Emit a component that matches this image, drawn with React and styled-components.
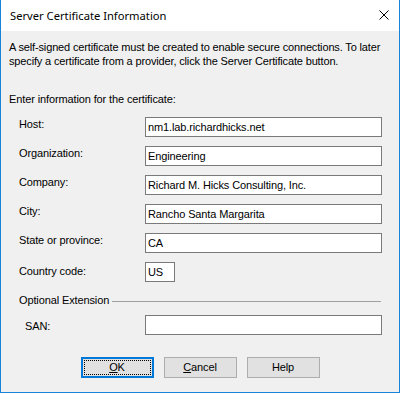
import React from "react";
import styled, { createGlobalStyle } from "styled-components";

const Global = createGlobalStyle`
  html, body { margin: 0; padding: 0; background: #f0f0f0; }
  #root { width: 400px; height: 393px; }
`;

const Window = styled.div`
  box-sizing: border-box;
  width: 400px;
  height: 393px;
  background: #f0f0f0;
  border: 1px solid #1883d7;
  border-top: none;
  display: flex;
  flex-direction: column;
  font-family: "Liberation Sans", Arial, sans-serif;
  font-size: 11px;
  line-height: 13px;
  letter-spacing: -0.12px;
  color: #000;
`;

const TitleBar = styled.div`
  height: 31px;
  flex: none;
  background: #fff;
  display: flex;
  align-items: center;
  justify-content: space-between;
  padding: 0 10px 0 9px;
`;

const Title = styled.div`
  font-family: "Noto Sans", "Open Sans", sans-serif;
  font-size: 11.2px;
  letter-spacing: 0;
  line-height: 16px;
  margin-top: 1px;
`;

const CloseButton = styled.div`
  width: 10px;
  height: 10px;
  margin-top: -2px;
  display: flex;
`;

const Body = styled.div`
  display: flex;
  flex-direction: column;
  padding: 9px 10px 0 8px;
`;

const Intro = styled.p`
  margin: 0;
  line-height: 14px;
  letter-spacing: -0.15px;
`;

const SectionLabel = styled.div`
  margin-top: 25px;
`;

const Form = styled.div`
  margin-top: 11px;
  padding-left: 10px;
  display: grid;
  grid-template-columns: 126px 237px;
  row-gap: 9px;
`;

const Label = styled.div`
  padding-top: ${(p) => p.$offset || 1}px;
  padding-left: ${(p) => p.$indent || 0}px;
`;

const Input = styled.div`
  box-sizing: border-box;
  height: 20px;
  width: ${(p) => p.$width || 237}px;
  background: #fff;
  border: 1px solid #7a7a7a;
  padding: 0 2px;
  display: flex;
  align-items: center;
  white-space: nowrap;
  overflow: hidden;
`;

const GroupHeader = styled.div`
  margin-top: 12px;
  margin-left: 10px;
  display: flex;
  align-items: center;
  gap: 3px;
  width: 362px;
`;

const GroupLine = styled.div`
  flex: 1;
  height: 1px;
  background: #a0a0a0;
  margin-top: 1px;
`;

const SanForm = styled(Form)`
  margin-top: 8px;
`;

const Buttons = styled.div`
  margin-top: 22px;
  display: flex;
  justify-content: center;
  gap: 10px;
  margin-left: 2px;
`;

const Button = styled.div`
  box-sizing: border-box;
  width: 73px;
  height: 21px;
  background: #e1e1e1;
  border: ${(p) => (p.$default ? "2px solid #0078d7" : "1px solid #adadad")};
  display: flex;
  align-items: center;
  justify-content: center;
  position: relative;
  &::after {
    content: "";
    display: ${(p) => (p.$default ? "block" : "none")};
    position: absolute;
    inset: 1px;
    border: 1px dotted #000;
  }
`;

const Mnemonic = styled.span`
  text-decoration: underline;
  text-underline-offset: 1px;
`;

const rows = [
  ["Host:", "nm1.lab.richardhicks.net"],
  ["Organization:", "Engineering"],
  ["Company:", "Richard M. Hicks Consulting, Inc."],
  ["City:", "Rancho Santa Margarita"],
  ["State or province:", "CA"],
];

export default function App() {
  return (
    <>
      <Global />
      <Window>
        <TitleBar>
          <Title>Server Certificate Information</Title>
          <CloseButton>
            <svg width="10" height="10" viewBox="0 0 10 10">
              <path d="M0.5 0.5 L9.5 9.5 M9.5 0.5 L0.5 9.5" stroke="#000" strokeWidth="1" fill="none" />
            </svg>
          </CloseButton>
        </TitleBar>
        <Body>
          <Intro>
            A self-signed certificate must be created to enable secure connections. To later
            specify a certificate from a provider, click the Server Certificate button.
          </Intro>
          <SectionLabel>Enter information for the certificate:</SectionLabel>
          <Form>
            {rows.map(([l, v]) => (
              <React.Fragment key={l}>
                <Label>{l}</Label>
                <Input>{v}</Input>
              </React.Fragment>
            ))}
            <Label $offset={3}>Country code:</Label>
            <Input $width={30}>US</Input>
          </Form>
          <GroupHeader>
            <span>Optional Extension</span>
            <GroupLine />
          </GroupHeader>
          <SanForm>
            <Label $offset={5} $indent={6}>SAN:</Label>
            <Input />
          </SanForm>
          <Buttons>
            <Button $default>
              <span><Mnemonic>O</Mnemonic>K</span>
            </Button>
            <Button>
              <span><Mnemonic>C</Mnemonic>ancel</span>
            </Button>
            <Button>Help</Button>
          </Buttons>
        </Body>
      </Window>
    </>
  );
}
